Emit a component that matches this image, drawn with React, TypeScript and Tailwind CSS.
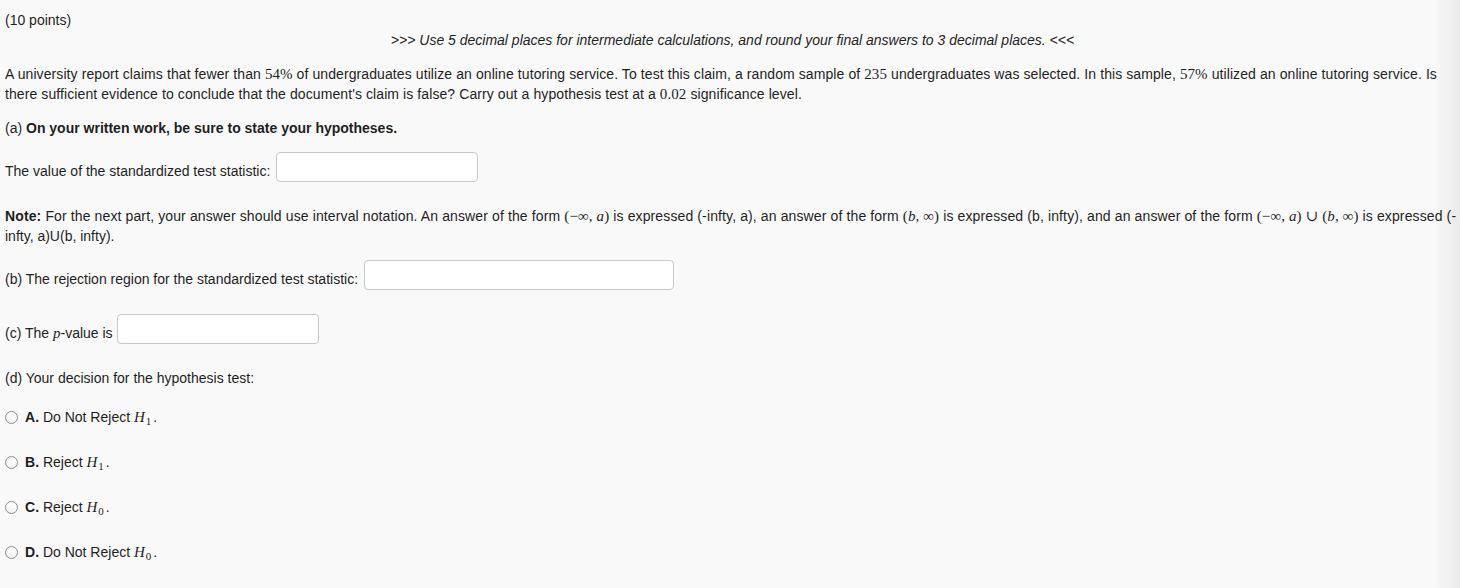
import React from "react";

const serif = "font-['Liberation_Serif','DejaVu_Serif',serif] text-[15px]";

function M({ children, italic }: { children: React.ReactNode; italic?: boolean }) {
  return <span className={`${serif} ${italic ? "italic" : ""}`}>{children}</span>;
}

function H({ sub }: { sub: string }) {
  return (
    <span className={serif}>
      <span className="italic">H</span>
      <sub className="text-[11px] ml-[1px] mr-[2px] bottom-[-3px]">{sub}</sub>
    </span>
  );
}

function Answer({ width }: { width: string }) {
  return <div className={`h-[30px] ${width} shrink-0 rounded-[4px] border border-[#c9c9c9] bg-white`} />;
}

function Choice({ letter, children }: { letter: string; children: React.ReactNode }) {
  return (
    <div className="mt-[25px] flex h-5 items-center gap-[7px] first:mt-[19px]">
      <span className="size-[13px] rounded-full border border-[#8c8c8c] bg-gradient-to-b from-white to-[#f1f1f1]" />
      <span className="whitespace-nowrap">
        <b>{letter}.</b> {children}.
      </span>
    </div>
  );
}

export default function App() {
  return (
    <div className="relative min-h-[588px] overflow-hidden bg-[#f9f9f9] pl-[5px] pt-[10px] font-['Liberation_Sans',Arial,sans-serif] text-[14px] leading-5 text-[#1f1f1f]">
      <div>(10 points)</div>
      <div className="text-center italic">
        &gt;&gt;&gt; Use 5 decimal places for intermediate calculations, and round your final answers to 3 decimal places. &lt;&lt;&lt;
      </div>

      <p className="mt-[14px] tracking-[0.09px]">
        <span className="block whitespace-nowrap">
          A university report claims that fewer than <M>54%</M> of undergraduates utilize an online tutoring service. To test this claim, a random sample of <M>235</M> undergraduates was selected. In this sample, <M>57%</M> utilized an online tutoring service. Is
        </span>
        <span className="block whitespace-nowrap">
          there sufficient evidence to conclude that the document's claim is false? Carry out a hypothesis test at a <M>0.02</M> significance level.
        </span>
      </p>

      <p className="mt-[14px]">
        (a) <b>On your written work, be sure to state your hypotheses.</b>
      </p>

      <div className="mt-[14px] flex items-end gap-[6px]">
        <span className="mb-[1px]">The value of the standardized test statistic:</span>
        <Answer width="w-[202px]" />
      </div>

      <p className="mt-[24px]">
        <span className="block whitespace-nowrap tracking-[0.12px]">
          <b>Note:</b> For the next part, your answer should use interval notation. An answer of the form <M>(−∞, <i>a</i>)</M> is expressed (-infty, a), an answer of the form <M>(<i>b</i>, ∞)</M> is expressed (b, infty), and an answer of the form <M>(−∞, <i>a</i>) ∪ (<i>b</i>, ∞)</M> is expressed (-
        </span>
        <span className="block">infty, a)U(b, infty).</span>
      </p>

      <div className="mt-[14px] flex items-end gap-[6px]">
        <span className="mb-[1px]">(b) The rejection region for the standardized test statistic:</span>
        <Answer width="w-[310px]" />
      </div>

      <div className="mt-[24px] flex items-end gap-[4px]">
        <span className="mb-[1px]">
          (c) The <M italic>p</M>-value is
        </span>
        <Answer width="w-[202px]" />
      </div>

      <p className="mt-[24px]">(d) Your decision for the hypothesis test:</p>

      <div>
        <Choice letter="A">
          Do Not Reject <H sub="1" />
        </Choice>
        <Choice letter="B">
          Reject <H sub="1" />
        </Choice>
        <Choice letter="C">
          Reject <H sub="0" />
        </Choice>
        <Choice letter="D">
          Do Not Reject <H sub="0" />
        </Choice>
      </div>

      <div className="pointer-events-none absolute inset-y-0 right-0 w-[26px] bg-gradient-to-r from-transparent to-black/[0.06]" />
    </div>
  );
}
